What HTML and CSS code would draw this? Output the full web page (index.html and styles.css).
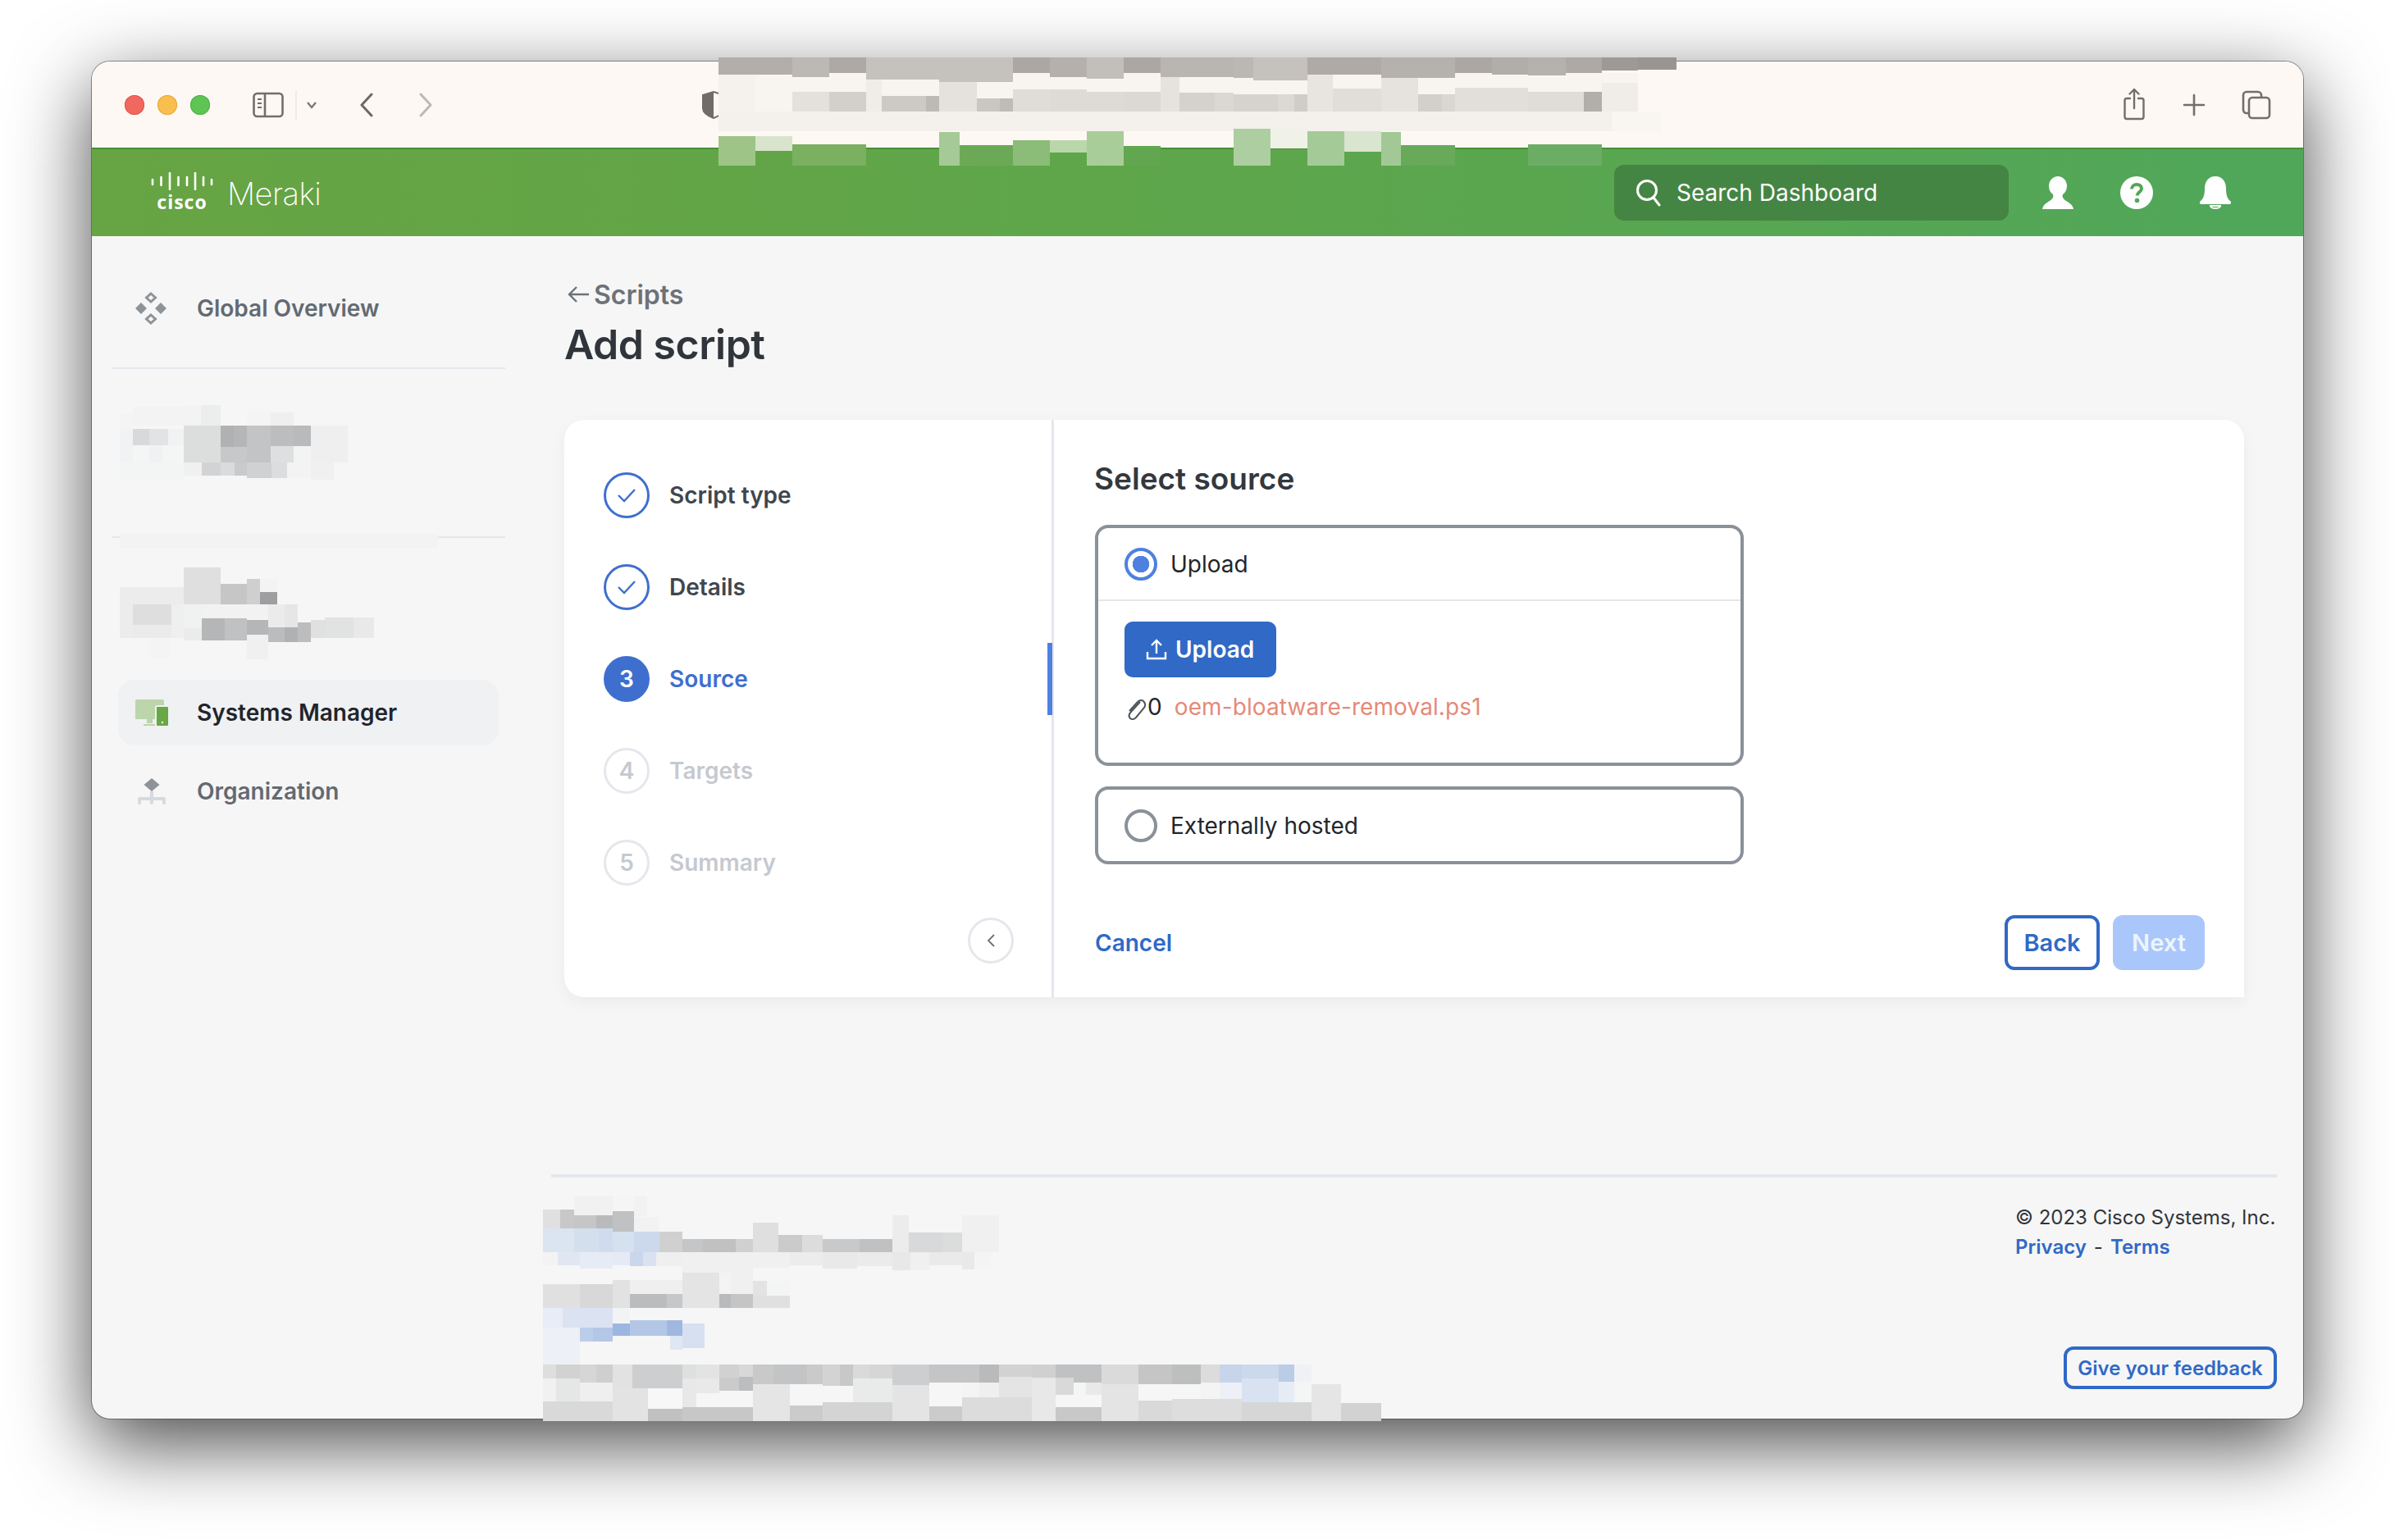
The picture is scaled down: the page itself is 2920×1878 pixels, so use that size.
FILE: index.html
```html
<!DOCTYPE html>
<html lang="en">
<head>
<meta charset="utf-8">
<title>Add script</title>
<link rel="stylesheet" href="styles.css">
</head>
<body>
<div class="page">
  <div class="window">
    <div class="titlebar">
      <div class="traffic">
        <span class="light light-red"></span><span class="light light-yellow"></span><span class="light light-green"></span>
      </div>
      <svg class="ic-sidebar" width="38" height="32" viewBox="0 0 38 32" fill="none" stroke="#736e69" stroke-width="2.6"><rect x="1.5" y="2" width="35" height="28" rx="4"/><path d="M15 2v28"/><path d="M6 9h5M6 14h5M6 19h5" stroke-width="2"/></svg>
      <span class="tb-sep"></span>
      <svg class="ic-caret" width="14" height="10" viewBox="0 0 14 10" fill="none" stroke="#7d7873" stroke-width="2.4"><path d="M2 2l5 6 5-6"/></svg>
      <svg class="ic-back" width="18" height="30" viewBox="0 0 18 30" fill="none" stroke="#6d6864" stroke-width="3" stroke-linecap="round" stroke-linejoin="round"><path d="M15 2L3 15l12 13"/></svg>
      <svg class="ic-fwd" width="18" height="30" viewBox="0 0 18 30" fill="none" stroke="#bdb9b5" stroke-width="3" stroke-linecap="round" stroke-linejoin="round"><path d="M3 2l12 13L3 28"/></svg>
      <svg class="ic-shield" width="28" height="34" viewBox="0 0 28 34"><path d="M14 1L1 5v16c0 5 5 9 13 12 8-3 13-7 13-12V5z" fill="#fdf8f4" stroke="#716c67" stroke-width="2"/><path d="M14 1L1 5v16c0 5 5 9 13 12z" fill="#716c67"/></svg>
      <span class="tb-fill"></span>
      <svg class="ic-share" width="26" height="40" viewBox="0 0 26 40" fill="none" stroke="#736e69" stroke-width="2.4" stroke-linecap="round" stroke-linejoin="round"><path d="M8 13H4a2.500 2.500 0 0 0-2.500 2.500v20A2.500 2.500 0 0 0 4 38h18a2.500 2.500 0 0 0 2.500-2.500v-20A2.500 2.500 0 0 0 22 13h-4"/><path d="M13 25V2M7.500 7.500L13 2l5.500 5.500"/></svg>
      <svg class="ic-plus" width="28" height="28" viewBox="0 0 28 28" stroke="#736e69" stroke-width="2.600" stroke-linecap="round"><path d="M14 2v24M2 14h24"/></svg>
      <svg class="ic-tabs" width="36" height="36" viewBox="0 0 36 36" fill="none" stroke="#736e69" stroke-width="2.600"><path d="M8 28H6a4 4 0 0 1-4-4V6a4 4 0 0 1 4-4h14a4 4 0 0 1 4 4v2"/><rect x="9" y="9" width="25" height="25" rx="4"/></svg>
    </div>

    <header class="appbar">
      <div class="logo">
        <div class="cisco">
          <svg class="cisco-bars" width="76" height="22" viewBox="0 0 76 22" stroke="#fff" stroke-width="2.600" stroke-linecap="round"><path d="M2 9v6M12.500 6v10M23 1v20M33.500 6v10M44 6v10M54 1v20M64 6v10M74 9v6"/></svg>
          <span class="cisco-word">cisco</span>
        </div>
        <span class="meraki">Meraki</span>
      </div>
      <div class="search">
        <svg width="32" height="34" viewBox="0 0 32 34" fill="none" stroke="#fff" stroke-width="3" stroke-linecap="round"><circle cx="14" cy="14" r="11.500"/><path d="M22 23l7 9"/></svg>
        <span>Search Dashboard</span>
      </div>
      <svg class="ic-user" width="40" height="40" viewBox="0 0 40 40" fill="#fff"><ellipse cx="20" cy="12" rx="11" ry="12"/><path d="M14 22c1 3 0 5-4 8-5 3-8 5-9 10h38c-1-5-4-7-9-10-4-3-5-5-4-8z"/></svg>
      <svg class="ic-help" width="40" height="40" viewBox="0 0 40 40"><circle cx="20" cy="20" r="20" fill="#fff"/><path d="M14 15.500c0-3.500 3-5.500 6-5.500 3.500 0 6 2 6 5 0 4-5 4.500-5.500 8.500" fill="none" stroke="#53a757" stroke-width="4"/><circle cx="20.500" cy="29.500" r="2.800" fill="#53a757"/></svg>
      <svg class="ic-bell" width="38" height="40" viewBox="0 0 38 40" fill="#fff"><path d="M19 0C10 0 6 7 6 15c0 6-1 12-5 15-2 2-1 4 1 4h34c2 0 3-2 1-4-4-3-5-9-5-15C32 7 28 0 19 0z"/><path d="M13 36h12a6 3 0 0 1-12 0z" fill="none" stroke="#fff" stroke-width="2"/></svg>
    </header>

    <div class="body">
      <nav class="sidebar">
        <a class="nav-item nav-global">
          <svg class="nav-icon" width="40" height="40" viewBox="0 0 40 40"><path d="M1 20l7-7 7 7-7 7zM25 20l7-7 7 7-7 7z" fill="#8e9398"/><path d="M20 2l5.500 5-5.500 5-5.500-5zM20 28l5.500 5-5.500 5-5.500-5z" fill="none" stroke="#8e9398" stroke-width="3"/></svg>
          <span>Global Overview</span>
        </a>
        <hr class="nav-rule">
        <div class="nav-spacer"></div>
        <hr class="nav-rule">
        <div class="nav-spacer-2"></div>
        <a class="nav-item nav-active">
          <svg class="nav-icon" width="42" height="34" viewBox="0 0 42 34"><path d="M1 3a2 2 0 0 1 2-2h31a2 2 0 0 1 2 2v22H1z" fill="#bcd5ab"/><path d="M15 25h7v5h-7zM11 31h15v2H11z" fill="#bcd5ab"/><rect x="26" y="9" width="16" height="25" rx="2" fill="#68a845" stroke="#f0f1f3" stroke-width="2"/><circle cx="34" cy="29" r="1.200" fill="#fff"/></svg>
          <span>Systems Manager</span>
        </a>
        <a class="nav-item nav-org">
          <svg class="nav-icon" width="34" height="32" viewBox="0 0 34 32"><path d="M17 0l9.500 8-9.500 8-9.500-8z" fill="#8e9398"/><path d="M15 16h4v9h-4z" fill="#d6d9dd"/><path d="M2 23h30a2 2 0 0 1 2 2v5a2 2 0 0 1-4 0v-3H19v3a2 2 0 0 1-4 0v-3H4v3a2 2 0 0 1-4 0v-5a2 2 0 0 1 2-2z" fill="#d6d9dd"/></svg>
          <span>Organization</span>
        </a>
      </nav>

      <main class="main">
        <a class="crumb">
          <svg width="28" height="22" viewBox="0 0 28 22" fill="none" stroke="#6c7279" stroke-width="2.400"><path d="M27 11H3M12 2l-9 9 9 9"/></svg>
          <span>Scripts</span>
        </a>
        <h1 class="title">Add script</h1>

        <section class="card">
          <aside class="steps">
            <ol class="step-list">
              <li class="step step-done"><span class="bubble"><svg width="26" height="20" viewBox="0 0 26 20" fill="none" stroke="#3f6fce" stroke-width="2.400"><path d="M3 10l7 7L23 3"/></svg></span><span>Script type</span></li>
              <li class="step step-done"><span class="bubble"><svg width="26" height="20" viewBox="0 0 26 20" fill="none" stroke="#3f6fce" stroke-width="2.400"><path d="M3 10l7 7L23 3"/></svg></span><span>Details</span></li>
              <li class="step step-current"><span class="bubble">3</span><span>Source</span></li>
              <li class="step step-todo"><span class="bubble">4</span><span>Targets</span></li>
              <li class="step step-todo"><span class="bubble">5</span><span>Summary</span></li>
            </ol>
            <span class="collapse"><svg width="12" height="18" viewBox="0 0 12 18" fill="none" stroke="#6c7279" stroke-width="1.800"><path d="M10 2L3 9l7 7"/></svg></span>
            <span class="step-marker"></span>
          </aside>
          <div class="panel">
            <h2 class="panel-title">Select source</h2>
            <div class="option option-open">
              <label class="option-head"><span class="radio radio-on"></span><span>Upload</span></label>
              <div class="option-body">
                <button class="btn-upload">
                  <svg width="26" height="28" viewBox="0 0 26 28" fill="none" stroke="#fff" stroke-width="2.400"><path d="M13 19V3M7 9l6-6 6 6M2 17v8h22v-8"/></svg>
                  <span>Upload</span>
                </button>
                <div class="file">
                  <svg width="24" height="28" viewBox="0 0 24 28" fill="none" stroke="#50555b" stroke-width="2"><path d="M17 5L6 17c-3 3-3 6-1 8s5 1 7-1L22 12c2-3 1-6-1-8s-5-1-7 1L4 16"/></svg>
                  <span class="file-count">0</span>
                  <span class="file-name">oem-bloatware-removal.ps1</span>
                </div>
              </div>
            </div>
            <div class="option">
              <label class="option-head"><span class="radio"></span><span>Externally hosted</span></label>
            </div>
            <div class="actions">
              <a class="link-cancel">Cancel</a>
              <span class="actions-fill"></span>
              <button class="btn btn-back">Back</button>
              <button class="btn btn-next">Next</button>
            </div>
          </div>
        </section>

        <footer class="footer">
          <div class="legal">
            <div class="copyright">© 2023 Cisco Systems, Inc.</div>
            <div class="legal-links"><a>Privacy</a><span class="dash">-</span><a>Terms</a></div>
          </div>
          <button class="btn-feedback">Give your feedback</button>
        </footer>
      </main>
    </div>
  </div>

  <svg class="mosaic mosaic-top" viewBox="0 0 1573 480" preserveAspectRatio="none" shape-rendering="crispEdges">
    <rect x="47" y="87" width="1464" height="141" fill="#f8f4f0"/>
    <rect x="47" y="228" width="1423" height="72" fill="#f4f0ec"/>
    <rect x="1470" y="228" width="80" height="72" fill="#f9f5f1"/>
    <rect x="47" y="30" width="118" height="63" fill="#b3aeaa"/><rect x="165" y="30" width="58" height="72" fill="#bcb8b4"/><rect x="223" y="30" width="59" height="57" fill="#aea9a5"/><rect x="282" y="30" width="117" height="81" fill="#c5c1bd"/><rect x="399" y="30" width="117" height="90" fill="#c5c1bd"/><rect x="516" y="30" width="59" height="57" fill="#aca7a3"/><rect x="575" y="30" width="59" height="72" fill="#b5b0ac"/><rect x="634" y="30" width="59" height="78" fill="#c2beba"/><rect x="693" y="30" width="58" height="57" fill="#aca7a3"/><rect x="751" y="30" width="117" height="72" fill="#b9b5b1"/><rect x="868" y="30" width="31" height="75" fill="#bbb7b3"/><rect x="899" y="30" width="86" height="84" fill="#c5c1bd"/><rect x="985" y="30" width="118" height="63" fill="#afaaa6"/><rect x="1103" y="30" width="117" height="75" fill="#b5b1ad"/><rect x="1220" y="30" width="59" height="57" fill="#aca7a3"/><rect x="1279" y="30" width="58" height="63" fill="#b1adaa"/><rect x="1337" y="30" width="59" height="66" fill="#b5b1ad"/><rect x="1396" y="30" width="58" height="57" fill="#aea9a5"/><rect x="1454" y="30" width="57" height="48" fill="#9e9995"/><rect x="1511" y="30" width="62" height="45" fill="#9a9591"/>
    <rect x="47" y="93" width="59" height="135" fill="#f5f1ed"/><rect x="165" y="156" width="58" height="72" fill="#e4e0dc"/><rect x="223" y="156" width="59" height="72" fill="#d3cfcb"/><rect x="282" y="111" width="25" height="117" fill="#f0ece8"/><rect x="307" y="171" width="71" height="57" fill="#cdc9c5"/><rect x="378" y="171" width="21" height="57" fill="#bdb9b5"/><rect x="399" y="120" width="59" height="108" fill="#e5e1dd"/><rect x="458" y="180" width="37" height="48" fill="#cac6c2"/><rect x="495" y="180" width="21" height="48" fill="#bfbbb7"/><rect x="516" y="147" width="59" height="81" fill="#e0ddd8"/><rect x="575" y="147" width="59" height="81" fill="#dedbd6"/><rect x="634" y="156" width="59" height="72" fill="#dedbd6"/><rect x="693" y="156" width="58" height="72" fill="#dcd9d4"/><rect x="751" y="102" width="30" height="126" fill="#e6e2de"/><rect x="781" y="159" width="57" height="69" fill="#d5d2cd"/><rect x="838" y="159" width="30" height="69" fill="#dbd7d3"/><rect x="868" y="165" width="70" height="63" fill="#d6d2ce"/><rect x="938" y="165" width="26" height="63" fill="#dcd9d4"/><rect x="964" y="165" width="21" height="63" fill="#d0cdc8"/><rect x="985" y="93" width="41" height="135" fill="#e8e5e0"/><rect x="1026" y="144" width="77" height="84" fill="#e1ded9"/><rect x="1103" y="105" width="59" height="123" fill="#e6e3de"/><rect x="1162" y="165" width="38" height="63" fill="#d3cfcb"/><rect x="1200" y="165" width="20" height="63" fill="#dad6d2"/><rect x="1220" y="141" width="117" height="87" fill="#e2dfda"/><rect x="1337" y="156" width="89" height="72" fill="#e0ddd9"/><rect x="1426" y="156" width="28" height="72" fill="#b2aeaa"/><rect x="1454" y="123" width="57" height="105" fill="#f0ece8"/>
    <rect x="47" y="318" width="59" height="108" fill="#9fc487"/><rect x="106" y="318" width="59" height="54" fill="#d8e4cc"/><rect x="165" y="348" width="117" height="78" fill="#7ab060"/><rect x="399" y="303" width="32" height="123" fill="#a5c997"/><rect x="431" y="351" width="85" height="75" fill="#6ca956"/><rect x="516" y="333" width="59" height="93" fill="#8bbc78"/><rect x="575" y="333" width="59" height="45" fill="#bad7aa"/><rect x="634" y="300" width="59" height="126" fill="#a9cd98"/><rect x="693" y="354" width="58" height="72" fill="#63a650"/><rect x="868" y="291" width="58" height="135" fill="#adcea0"/><rect x="926" y="291" width="59" height="72" fill="#f0f2e8"/><rect x="985" y="300" width="59" height="126" fill="#a4cb97"/><rect x="1044" y="300" width="59" height="75" fill="#d9e5cf"/><rect x="1103" y="303" width="31" height="123" fill="#a2c995"/><rect x="1134" y="351" width="86" height="75" fill="#68a95a"/><rect x="1337" y="348" width="117" height="78" fill="#6cad66"/>
  </svg>

  <svg class="mosaic mosaic-side" viewBox="0 0 1560 1568" preserveAspectRatio="none" shape-rendering="crispEdges">
    <rect x="78" y="412" width="48" height="43" fill="#f3f4f3"/><rect x="126" y="395" width="186" height="51" fill="#f3f3f3"/><rect x="312" y="390" width="63" height="56" fill="#f3f3f3"/><rect x="375" y="390" width="72" height="56" fill="#eceded"/><rect x="543" y="405" width="87" height="41" fill="#f3f4f3"/><rect x="630" y="410" width="84" height="36" fill="#eeefee"/>
    <rect x="78" y="455" width="48" height="92" fill="#f1f2f3"/><rect x="126" y="500" width="186" height="47" fill="#f4f5f5"/><rect x="126" y="455" width="60" height="45" fill="#d8d9da"/><rect x="186" y="455" width="69" height="45" fill="#e2e3e4"/><rect x="255" y="455" width="57" height="45" fill="#f1f2f2"/><rect x="312" y="446" width="135" height="101" fill="#dcdddd"/><rect x="447" y="446" width="48" height="59" fill="#b0b1b2"/><rect x="495" y="446" width="48" height="59" fill="#b5b6b7"/><rect x="543" y="446" width="87" height="101" fill="#c3c4c5"/><rect x="630" y="446" width="84" height="56" fill="#bcbdbe"/><rect x="714" y="446" width="63" height="56" fill="#b9babb"/><rect x="777" y="446" width="135" height="101" fill="#efefef"/><rect x="186" y="500" width="48" height="47" fill="#f0f1f2"/><rect x="447" y="505" width="96" height="42" fill="#c7c8c9"/><rect x="630" y="502" width="84" height="45" fill="#dedfe0"/><rect x="714" y="502" width="63" height="45" fill="#f2f3f3"/>
    <rect x="78" y="547" width="234" height="48" fill="#f3f4f4"/><rect x="312" y="547" width="66" height="35" fill="#f0f0f0"/><rect x="378" y="547" width="69" height="35" fill="#d2d3d4"/><rect x="447" y="547" width="51" height="35" fill="#dadbdc"/><rect x="498" y="547" width="45" height="35" fill="#c9cacb"/><rect x="543" y="547" width="90" height="41" fill="#d0d1d2"/><rect x="633" y="547" width="57" height="41" fill="#dcddde"/><rect x="690" y="547" width="87" height="41" fill="#f3f3f3"/><rect x="777" y="547" width="84" height="46" fill="#f0f0f0"/>
    <rect x="78" y="742" width="1164" height="38" fill="#f3f3f3"/>
    <rect x="312" y="833" width="135" height="101" fill="#dfdfdf"/><rect x="447" y="877" width="96" height="57" fill="#c6c6c7"/><rect x="543" y="865" width="48" height="69" fill="#cecfcf"/><rect x="591" y="865" width="63" height="35" fill="#f3f3f3"/><rect x="591" y="900" width="63" height="34" fill="#9e9ea1"/><rect x="78" y="887" width="234" height="47" fill="#ececec"/>
    <rect x="78" y="934" width="48" height="93" fill="#ececec"/><rect x="126" y="934" width="141" height="56" fill="#dedede"/><rect x="267" y="934" width="45" height="93" fill="#efefef"/><rect x="312" y="934" width="66" height="66" fill="#f0f1f1"/><rect x="378" y="934" width="243" height="38" fill="#f2f2f2"/><rect x="621" y="934" width="60" height="63" fill="#ebebeb"/><rect x="681" y="934" width="48" height="63" fill="#e6e6e7"/>
    <rect x="378" y="972" width="84" height="60" fill="#b5b6b7"/><rect x="462" y="972" width="81" height="60" fill="#c0c1c2"/><rect x="543" y="977" width="78" height="41" fill="#b5b6b7"/><rect x="621" y="997" width="60" height="41" fill="#bbbcbd"/><rect x="681" y="997" width="48" height="41" fill="#b0b1b2"/><rect x="729" y="983" width="48" height="55" fill="#bcbdbe"/><rect x="777" y="977" width="51" height="50" fill="#e0e0e0"/><rect x="828" y="970" width="105" height="57" fill="#e1e2e2"/><rect x="933" y="970" width="75" height="57" fill="#e9e9e9"/><rect x="126" y="990" width="141" height="37" fill="#ebebeb"/><rect x="312" y="1000" width="66" height="32" fill="#ebebeb"/><rect x="543" y="1018" width="78" height="67" fill="#f0f0f0"/><rect x="183" y="1030" width="79" height="50" fill="#f4f4f4"/><rect x="78" y="1030" width="105" height="100" fill="#f6f6f6"/>
  </svg>

  <svg class="mosaic mosaic-foot" viewBox="0 0 1568 1434" preserveAspectRatio="none" shape-rendering="crispEdges">
    <rect x="86" y="174" width="67" height="71" fill="#f1f1f1"/><rect x="153" y="174" width="37" height="56" fill="#f5f5f5"/><rect x="190" y="174" width="22" height="76" fill="#f2f2f2"/><rect x="31" y="225" width="30" height="69" fill="#e0e0e0"/><rect x="61" y="225" width="25" height="69" fill="#c8c8c9"/><rect x="86" y="245" width="38" height="49" fill="#c6c6c7"/><rect x="124" y="245" width="29" height="49" fill="#b9babb"/><rect x="153" y="231" width="37" height="75" fill="#c0c1c2"/><rect x="190" y="252" width="44" height="54" fill="#f2f2f2"/>
    <rect x="31" y="294" width="55" height="87" fill="#dbe4f1"/><rect x="86" y="294" width="43" height="87" fill="#d4dfee"/><rect x="129" y="294" width="24" height="87" fill="#d0dcee"/><rect x="153" y="306" width="37" height="75" fill="#d5e1ef"/><rect x="190" y="306" width="44" height="75" fill="#ccd9ec"/><rect x="234" y="306" width="40" height="75" fill="#d0d0d0"/><rect x="274" y="333" width="36" height="48" fill="#c5c6c7"/><rect x="310" y="333" width="56" height="48" fill="#c1c1c2"/><rect x="366" y="333" width="30" height="48" fill="#d0d0d0"/><rect x="396" y="273" width="44" height="108" fill="#dfdfdf"/><rect x="440" y="318" width="42" height="63" fill="#cbcbcc"/><rect x="482" y="318" width="35" height="63" fill="#dcdcdc"/><rect x="517" y="333" width="65" height="48" fill="#c8c9ca"/><rect x="582" y="333" width="57" height="48" fill="#c0c1c2"/><rect x="639" y="246" width="28" height="135" fill="#ececec"/><rect x="667" y="309" width="59" height="72" fill="#d8d9da"/><rect x="726" y="309" width="34" height="72" fill="#dbdcdc"/><rect x="760" y="246" width="64" height="135" fill="#f0f0f0"/>
    <rect x="31" y="381" width="26" height="48" fill="#f3f3f4"/><rect x="57" y="381" width="39" height="48" fill="#e0e7f2"/><rect x="96" y="381" width="57" height="60" fill="#e6ecf5"/><rect x="153" y="381" width="29" height="48" fill="#e6eaf5"/><rect x="182" y="381" width="23" height="51" fill="#c9d6ec"/><rect x="205" y="381" width="23" height="51" fill="#dae2f1"/><rect x="228" y="381" width="46" height="51" fill="#efefef"/><rect x="274" y="381" width="122" height="74" fill="#f0f0f0"/><rect x="396" y="381" width="64" height="56" fill="#f0f0f0"/><rect x="460" y="381" width="57" height="48" fill="#ececec"/><rect x="517" y="381" width="61" height="60" fill="#e9e9e9"/><rect x="578" y="381" width="61" height="51" fill="#ebebeb"/><rect x="639" y="381" width="31" height="66" fill="#e8e8e8"/><rect x="670" y="381" width="33" height="66" fill="#f0f0f0"/><rect x="703" y="381" width="57" height="48" fill="#e9eae9"/><rect x="760" y="381" width="21" height="63" fill="#e9e9e9"/><rect x="781" y="381" width="29" height="56" fill="#f4f4f4"/>
    <rect x="274" y="456" width="64" height="129" fill="#e3e4e3"/><rect x="338" y="456" width="20" height="78" fill="#f3f3f3"/><rect x="358" y="456" width="38" height="78" fill="#f0f0f0"/><rect x="396" y="486" width="25" height="54" fill="#e3e3e3"/><rect x="421" y="486" width="39" height="54" fill="#f3f5f5"/><rect x="31" y="498" width="65" height="87" fill="#dfe0df"/><rect x="96" y="498" width="57" height="87" fill="#d8d8d8"/><rect x="153" y="483" width="29" height="102" fill="#e2e2e2"/><rect x="182" y="483" width="92" height="51" fill="#efefef"/><rect x="182" y="534" width="65" height="51" fill="#bbbcbd"/><rect x="247" y="534" width="27" height="51" fill="#c6c7c8"/><rect x="338" y="534" width="20" height="51" fill="#b9babb"/><rect x="358" y="534" width="38" height="51" fill="#c5c5c6"/><rect x="396" y="540" width="64" height="45" fill="#e0e0e0"/>
    <rect x="31" y="585" width="35" height="72" fill="#e8ecf6"/><rect x="66" y="585" width="87" height="72" fill="#dbe2f1"/><rect x="153" y="585" width="29" height="57" fill="#f2f3f5"/><rect x="153" y="642" width="29" height="45" fill="#9db6e0"/><rect x="182" y="630" width="65" height="57" fill="#b3c6e6"/><rect x="247" y="630" width="27" height="57" fill="#a0b8e0"/><rect x="274" y="642" width="38" height="90" fill="#d6e0f1"/><rect x="252" y="687" width="22" height="51" fill="#dfe6f4"/><rect x="31" y="657" width="65" height="135" fill="#edf0f6"/><rect x="96" y="657" width="22" height="51" fill="#bccde9"/><rect x="118" y="657" width="35" height="51" fill="#b5c7e7"/>
    <rect x="31" y="792" width="23" height="51" fill="#dedede"/><rect x="54" y="792" width="42" height="51" fill="#d2d2d2"/><rect x="96" y="792" width="28" height="66" fill="#d6d6d6"/><rect x="124" y="792" width="29" height="66" fill="#cfcfcf"/><rect x="153" y="792" width="34" height="86" fill="#e2e2e2"/><rect x="187" y="792" width="87" height="86" fill="#cdcecf"/><rect x="274" y="792" width="24" height="51" fill="#dee0df"/><rect x="298" y="792" width="40" height="51" fill="#e3e3e3"/><rect x="338" y="792" width="34" height="48" fill="#d1d1d1"/><rect x="372" y="792" width="24" height="45" fill="#d8d8d8"/><rect x="396" y="792" width="36" height="72" fill="#c9c9ca"/><rect x="432" y="792" width="58" height="72" fill="#c3c4c5"/><rect x="490" y="792" width="27" height="72" fill="#cacaca"/><rect x="517" y="792" width="31" height="78" fill="#d3d3d3"/><rect x="548" y="792" width="22" height="78" fill="#c8c8c8"/><rect x="570" y="792" width="28" height="51" fill="#dadada"/><rect x="598" y="792" width="41" height="51" fill="#d6d6d6"/><rect x="639" y="792" width="64" height="75" fill="#cdcecf"/><rect x="703" y="792" width="87" height="66" fill="#c4c5c6"/><rect x="790" y="792" width="34" height="66" fill="#b9babb"/><rect x="824" y="792" width="57" height="45" fill="#d2d2d2"/><rect x="881" y="792" width="41" height="48" fill="#d0d0d0"/><rect x="922" y="792" width="80" height="66" fill="#c0c1c2"/><rect x="1002" y="792" width="64" height="72" fill="#dadada"/><rect x="1066" y="792" width="59" height="72" fill="#c5c5c6"/><rect x="1125" y="792" width="50" height="72" fill="#bdbebe"/><rect x="1175" y="792" width="32" height="66" fill="#dcdcdc"/><rect x="1207" y="792" width="39" height="66" fill="#c7d5ea"/><rect x="1246" y="792" width="64" height="51" fill="#cbd9ed"/><rect x="1310" y="792" width="27" height="63" fill="#bbcce7"/><rect x="1337" y="792" width="30" height="63" fill="#f0f1f6"/>
    <rect x="31" y="843" width="23" height="84" fill="#f1f1f1"/><rect x="54" y="843" width="42" height="84" fill="#e5e7e6"/><rect x="96" y="858" width="57" height="69" fill="#efefef"/><rect x="153" y="878" width="61" height="121" fill="#e3e3e3"/><rect x="214" y="878" width="60" height="76" fill="#f7f7f7"/><rect x="274" y="843" width="24" height="105" fill="#e8e8e8"/><rect x="298" y="843" width="40" height="54" fill="#e9e9e9"/><rect x="338" y="840" width="34" height="48" fill="#cbcbcc"/><rect x="372" y="837" width="24" height="51" fill="#bcbdbe"/><rect x="396" y="864" width="64" height="135" fill="#e5e5e5"/><rect x="570" y="843" width="69" height="87" fill="#e9ebea"/><rect x="639" y="867" width="64" height="132" fill="#e4e4e4"/><rect x="760" y="858" width="30" height="54" fill="#f4f4f4"/><rect x="790" y="858" width="34" height="54" fill="#efefef"/><rect x="824" y="837" width="57" height="75" fill="#e3e4e3"/><rect x="881" y="840" width="41" height="159" fill="#e8e8e8"/><rect x="922" y="840" width="32" height="63" fill="#d9d9d9"/><rect x="954" y="858" width="21" height="45" fill="#f5f5f5"/><rect x="975" y="858" width="27" height="45" fill="#e9e9e9"/><rect x="1002" y="864" width="64" height="135" fill="#e4e4e4"/><rect x="1175" y="858" width="32" height="60" fill="#f4f4f4"/><rect x="1207" y="858" width="39" height="72" fill="#edf0f6"/><rect x="1246" y="843" width="64" height="87" fill="#d8e2f1"/><rect x="1310" y="855" width="27" height="75" fill="#e6ecf5"/><rect x="1337" y="855" width="30" height="75" fill="#f4f5f5"/><rect x="1367" y="864" width="51" height="135" fill="#e5e5e5"/>
    <rect x="31" y="927" width="122" height="72" fill="#d9d9d9"/><rect x="214" y="954" width="60" height="45" fill="#c1c1c2"/><rect x="274" y="948" width="122" height="51" fill="#c7c7c8"/><rect x="460" y="942" width="57" height="57" fill="#cbcbcb"/><rect x="517" y="930" width="122" height="69" fill="#d4d4d4"/><rect x="703" y="945" width="57" height="54" fill="#cbcbcb"/><rect x="760" y="912" width="121" height="87" fill="#dcdcdc"/><rect x="922" y="948" width="80" height="51" fill="#c8c8c8"/><rect x="1066" y="924" width="59" height="75" fill="#d9d9d9"/><rect x="1125" y="918" width="121" height="81" fill="#dddddd"/><rect x="1246" y="930" width="121" height="69" fill="#d6d6d6"/><rect x="1418" y="933" width="70" height="66" fill="#d2d2d2"/>
  </svg>
</div>
</body>
</html>
```
FILE: styles.css
```css
* { box-sizing: border-box; }
html, body { margin: 0; padding: 0; background: #fff; }
body { font-family: "Inter", "Liberation Sans", sans-serif; }
.page { position: relative; width: 2920px; height: 1878px; padding: 75px 112px 148px; overflow: hidden; }

.window {
  height: 1655px; display: flex; flex-direction: column; overflow: hidden;
  border-radius: 22px; background: #f6f6f6;
  box-shadow: 0 0 0 1px rgba(60,60,60,.55), 0 30px 96px rgba(0,0,0,.72);
}

/* title bar */
.titlebar { height: 105px; flex: none; display: flex; align-items: center; padding-left: 40px; background: #fdf8f4; }
.traffic { display: flex; gap: 16px; }
.light { width: 24px; height: 24px; border-radius: 50%; }
.light-red { background: #f1685e; box-shadow: inset 0 0 0 1px #e0554b; }
.light-yellow { background: #f8bf4f; box-shadow: inset 0 0 0 1px #e4a83c; }
.light-green { background: #5ec454; box-shadow: inset 0 0 0 1px #4fb046; }
.ic-sidebar { margin-left: 52px; }
.tb-sep { width: 2px; height: 36px; margin-left: 14px; background: #efebe7; }
.ic-caret { margin-left: 11px; }
.ic-back { margin-left: 51px; }
.ic-fwd { margin-left: 54px; }
.ic-shield { margin-left: 328px; }
.tb-fill { flex: 1; }
.ic-share { margin-top: -2px; }
.ic-plus { margin-left: 46px; }
.ic-tabs { margin-left: 44px; margin-right: 39px; }

/* app bar */
.appbar {
  height: 108px; flex: none; display: flex; align-items: center; padding-left: 72px; padding-right: 88px;
  background: linear-gradient(90deg, #67a443 0%, #5ea64b 50%, #50a75a 100%);
  border-top: 2px solid #488f33;
}
.logo { display: flex; align-items: center; gap: 17px; flex: 1; }
.cisco { display: flex; flex-direction: column; align-items: center; width: 76px; margin-top: -4px; }
.cisco-word { color: #fff; font: 700 23px/22px "Open Sans", sans-serif; letter-spacing: 1px; margin-top: 3px; }
.meraki { color: #fff; font-weight: 200; font-size: 38px; line-height: 1; margin-top: 2px; letter-spacing: -.5px; }
.search {
  width: 481px; height: 68px; display: flex; align-items: center; gap: 18px; padding-left: 26px; border-radius: 12px;
  background: #458543; color: #fff; font-size: 28px;
}
.ic-user { margin-left: 40px; }
.ic-help { margin-left: 56px; }
.ic-bell { margin-left: 57px; }

/* layout */
.body { flex: 1; display: flex; min-height: 0; }
.sidebar { width: 576px; flex: none; padding: 48px 0 0 24px; }
.nav-item { display: flex; align-items: center; height: 80px; color: #636a72; font-size: 28px; font-weight: 600; text-decoration: none; margin-right: 80px; margin-left: 8px; border-radius: 20px; position: relative; }
.nav-item span { position: absolute; left: 96px; white-space: nowrap; }
.nav-icon { position: absolute; left: 20px; top: 50%; transform: translateY(-50%); }
.nav-org .nav-icon { left: 24px; }
.nav-rule { margin: 0 72px 0 0; border: 0; height: 2px; background: #e4e7ec; }
.nav-global { margin-bottom: 32px; }
.nav-spacer { height: 204px; }
.nav-spacer-2 { height: 173px; }
.nav-active { background: #f0f1f3; color: #21252b; }
.nav-org { margin-top: 16px; }

.main { flex: 1; min-width: 0; display: flex; flex-direction: column; padding: 55px 72px 0 0; }
.crumb { display: flex; align-items: center; gap: 5px; height: 32px; margin-left: 3px; color: #6c7279; font-size: 32px; font-weight: 600; }
.title { margin: 15px 0 0; font-size: 50px; line-height: 60px; font-weight: 600; color: #30353b; letter-spacing: -.5px; }

/* card */
.card { height: 704px; margin-top: 62px; display: flex; flex: none; background: #fff; border-radius: 24px 24px 0 24px; box-shadow: 0 6px 18px rgba(30,40,60,.05); }
.steps { position: relative; width: 597px; flex: none; padding: 64px 0 0 48px; border-right: 3px solid #e4e7ec; }
.step-list { list-style: none; margin: 0; padding: 0; display: flex; flex-direction: column; gap: 56px; }
.step { display: flex; align-items: center; gap: 24px; height: 56px; font-size: 28px; font-weight: 600; color: #40464d; }
.bubble { width: 56px; height: 56px; flex: none; display: flex; align-items: center; justify-content: center; border-radius: 50%; border: 3.5px solid #3f6fce; font-size: 28px; font-weight: 600; }
.step-current { color: #3f6fce; }
.step-current .bubble { background: #3f6fce; color: #fff; }
.step-todo { color: #c6c9cf; }
.step-todo .bubble { border-color: #e4e7ec; color: #c6c9cf; }
.collapse { position: absolute; left: 492px; top: 607px; width: 56px; height: 56px; display: flex; align-items: center; justify-content: center; border: 3.5px solid #e4e7ec; border-radius: 50%; }
.step-marker { position: absolute; right: -1px; top: 272px; width: 6px; height: 88px; background: #4f7fe0; }

.panel { flex: 1; min-width: 0; padding: 48px 48px 0 50px; display: flex; flex-direction: column; }
.panel-title { margin: 0 0 0 -1px; font-size: 37px; line-height: 48px; font-weight: 600; color: #33383e; }
.option { width: 791px; height: 95px; margin-top: 25px; border: 4px solid #8a9199; border-radius: 16px; flex: none; }
.option-open { height: 294px; margin-top: 32px; }
.option-head { display: flex; align-items: center; gap: 16px; height: 87px; padding-left: 32px; font-size: 28px; color: #22262c; }
.option-open .option-head { height: 89px; border-bottom: 2px solid #e4e7ec; }
.radio { width: 40px; height: 40px; flex: none; border: 4px solid #8a9199; border-radius: 50%; background: #fff; }
.radio-on { border-color: #4f80e0; background: radial-gradient(circle, #4f80e0 0 10px, #fff 10.500px); }
.option-body { padding: 25px 0 0 32px; }
.btn-upload { display: flex; align-items: center; gap: 10px; height: 68px; width: 185px; padding: 0 0 0 26px; border: 0; border-radius: 10px; background: #3069c6; color: #fff; font: 600 28px "Inter", sans-serif; }
.file { display: flex; align-items: center; margin-top: 16px; height: 40px; font-size: 28px; color: #22262c; letter-spacing: .1px; }
.file svg { margin: 6px 2px 0 2px; }
.file-name { margin-left: 15px; color: #e58a78; }

.actions { display: flex; align-items: center; gap: 16px; margin-top: 62px; height: 67px; }
.link-cancel { color: #3069c6; font-size: 28px; font-weight: 600; }
.actions-fill { flex: 1; }
.btn { height: 67px; border-radius: 12px; font: 600 29px "Inter", sans-serif; }
.btn-back { width: 116px; background: #fff; border: 4px solid #3069c6; color: #3069c6; }
.btn-next { width: 112px; background: #a9c7fa; border: 0; color: #eef4ff; }

/* footer */
.footer { position: relative; margin: 216px -40px 0 -16px; height: 262px; border-top: 4px solid #e4e7ec; flex: none; display: flex; flex-direction: column; align-items: flex-end; }
.legal { margin-top: 31px; font-size: 24px; line-height: 36px; width: 319px; }
.copyright { color: #30353b; white-space: nowrap; }
.legal-links { font-weight: 600; color: #3069c6; display: flex; gap: 9px; }
.dash { font-weight: 400; color: #30353b; }
.btn-feedback { margin-top: 103px; width: 260px; height: 55px; padding: 0; border: 4px solid #3069c6; border-radius: 12px; background: #f6f6f6; color: #3069c6; font: 600 24px "Inter", sans-serif; }

/* pixelated redactions laid over the page */
.mosaic { position: absolute; display: block; }
.mosaic-top { left: 840px; top: 60px; width: 1204px; height: 160px; }
.mosaic-side { left: 120px; top: 320px; width: 520px; height: 700px; }
.mosaic-foot { left: 640px; top: 1400px; width: 1100px; height: 478px; }
```
